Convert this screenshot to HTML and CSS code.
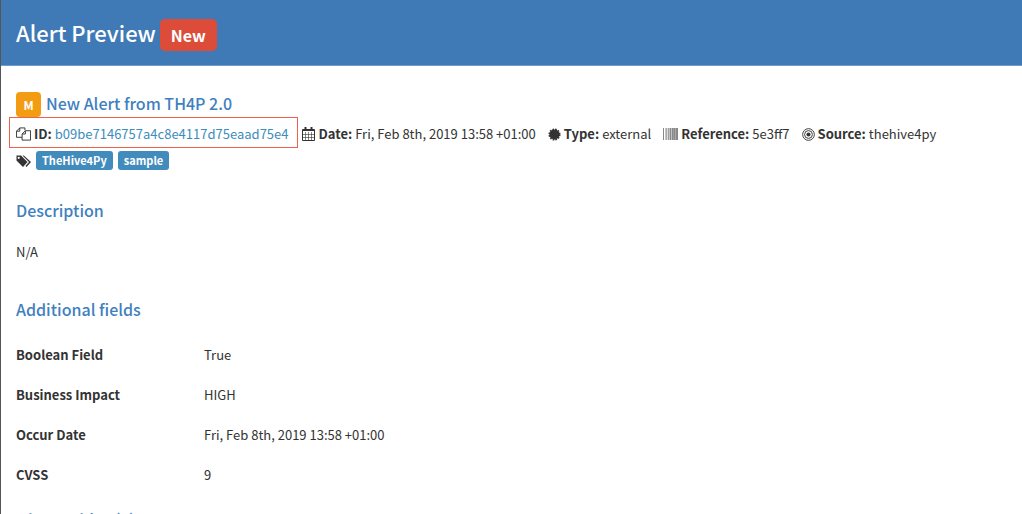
FILE: index.html
```html
<!DOCTYPE html>
<html lang="en">
<head>
  <meta charset="UTF-8">
  <meta name="viewport" content="width=device-width,initial-scale=1.0">
  <title>Alert Preview</title>
  <link rel="stylesheet" href="styles.css">
</head>
<body>

  <header class="modal-header">
    <h1>Alert Preview</h1>
    <span class="status">New</span>
  </header>

  <main class="modal-body">

    <!-- SUMMARY -->
    <section class="summary">
      <h2 class="title"><span class="severity">M</span>New Alert from TH4P 2.0</h2>

      <div class="meta">
        <div class="meta-item highlight">
          <svg class="icon" viewBox="0 0 16 16" fill="none" stroke="#333" stroke-linejoin="round"><path d="M6.500 11.500H.5V5L4 1.500h5.500V4M4 1.500V5H.5M6.500 8 10 4.500h5.500v10h-9zM10 4.500V8H6.500"/></svg>
          <b>ID:</b> <a href="#">b09be7146757a4c8e4117d75eaad75e4</a>
        </div>
        <div class="meta-item">
          <svg class="icon" viewBox="0 0 15 16" fill="none" stroke="#333"><path d="M1.500 3.500h12v11h-12z"/><path d="M1.500 4.500h12"/><path d="M4.500 6v8.500M7.500 6v8.500M10.500 6v8.500M1.500 8.500h12M1.500 11.500h12" stroke-width=".6"/><path d="M4.500 1v4M10.500 1v4" stroke-width="2"/></svg>
          <b>Date:</b> Fri, Feb 8th, 2019 13:58 +01:00
        </div>
        <div class="meta-item">
          <svg class="icon small" viewBox="0 0 14 14"><circle cx="7" cy="7" r="5.400" fill="#333"/><circle cx="7" cy="7" r="5.700" fill="none" stroke="#333" stroke-width="1.600" stroke-dasharray="1.800 1.184"/></svg>
          <b>Type:</b> external
        </div>
        <div class="meta-item">
          <svg class="icon" viewBox="0 0 15 14" fill="#888"><path d="M0 1h1v12H0zM2 1h.5v12H2zM3.300 1h1v12h-1zM5 1h.8v12H5zM6.500 1h2v12h-2zM9 1h1.800v12H9zM11 1h1.500v12H11zM12.800 1H15v12h-2.200z"/></svg>
          <b>Reference:</b> 5e3ff7
        </div>
        <div class="meta-item">
          <svg class="icon small" viewBox="0 0 14 14" fill="none" stroke="#333"><circle cx="7" cy="7" r="6.300" stroke-width="1"/><circle cx="7" cy="7" r="4.200" stroke-width="1"/><circle cx="7" cy="7" r="2.200" fill="#333" stroke="none"/></svg>
          <b>Source:</b> thehive4py
        </div>
      </div>

      <div class="tags">
        <svg class="icon" viewBox="0 0 15 14" fill="#333"><path fill-rule="evenodd" d="M.5 1.500H5L11.500 8 7 13 .5 6.500zM2.700 2.700a1.100 1.100 0 1 0 .1 2.200 1.100 1.100 0 0 0-.1-2.200z"/><path d="M6.500 1.500h1.300L15 8l-4.500 5-1-.9L13 8z"/></svg>
        <span class="tag">TheHive4Py</span>
        <span class="tag">sample</span>
      </div>
    </section>

    <section>
      <h3>Description</h3>
      <p>N/A</p>
    </section>

    <section class="additional">
      <h3>Additional fields</h3>
      <dl class="fields">
        <dt>Boolean Field</dt><dd>True</dd>
        <dt>Business Impact</dt><dd>HIGH</dd>
        <dt>Occur Date</dt><dd>Fri, Feb 8th, 2019 13:58 +01:00</dd>
        <dt>CVSS</dt><dd>9</dd>
      </dl>
    </section>

    <section>
      <h3>Observables (3)</h3>
    </section>

  </main>

</body>
</html>
```
FILE: styles.css
```css
* { box-sizing:border-box; }
body {
  margin:0;
  height:100vh;
  overflow:hidden;
  border-left:1px solid #555;
  background:#fff;
  color:#333;
  font:13px/20px "Noto Sans CJK SC", "Open Sans", sans-serif;
}
h1, h2, h3, p, dl, dd { margin:0; }
h1, h2, h3 { font-weight:500; }
a { color:#3c8dbc; text-decoration:none; }

.modal-header {
  display:flex;
  align-items:baseline;
  gap:4px;
  height:66px;
  padding:16px 15px 0;
  border-bottom:1px solid #6f9dca;
  background:#3f7ab7;
  color:#fff;
}
.modal-header h1 { font-size:22px; line-height:32px; }
.status {
  padding:0 11px;
  border-radius:5px;
  background:#dd4b39;
  font-size:16px;
  font-weight:bold;
  line-height:32px;
}

.modal-body { padding:25px 15px 0; }
.title, h3 { color:#3f80bf; font-size:16px; line-height:24px; }
.title { display:flex; align-items:baseline; gap:5px; }
.severity {
  width:25px;
  border-radius:4px;
  background:#f39c12;
  color:#fff;
  font-size:12px;
  font-weight:bold;
  line-height:25px;
  text-align:center;
}

.meta { display:flex; gap:12px; white-space:nowrap; }
.meta-item {
  display:flex;
  align-items:center;
  gap:3px;
  padding:6px 0 3px;
  border:solid transparent;
  border-width:1px 0;
}
.highlight {
  margin:0 -9px 0 -7px;
  padding:6px 8px 3px 6px;
  border:1px solid #f0604d;
}
.icon { flex:none; width:15px; height:16px; }
.icon.small { width:13px; height:13px; }

.tags { display:flex; align-items:center; gap:5px; padding-top:3px; }
.tag {
  padding:0 6px;
  border-radius:3px;
  background:#428bbd;
  color:#fff;
  font-size:11px;
  font-weight:bold;
  line-height:19px;
}

section { margin-bottom:35px; }
.summary { margin-bottom:28px; }
section p { padding-top:20px; }
.additional { margin-bottom:22px; }
.fields {
  display:grid;
  grid-template-columns:188px 1fr;
  row-gap:20px;
  padding-top:24px;
}
dt { font-weight:bold; }
```
